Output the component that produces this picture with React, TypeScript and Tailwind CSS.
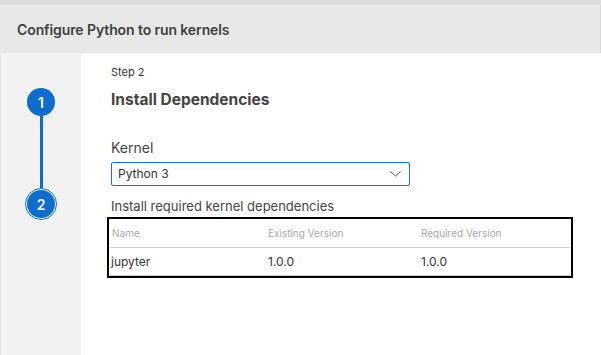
import React from 'react';

const font = { fontFamily: 'Inter, "Noto Sans", sans-serif' };

const deps = [{ name: 'jupyter', existing: '1.0.0', required: '1.0.0' }];

const App: React.FC = () => {
  return (
    <div className="w-[601px] h-[355px] flex flex-col bg-white overflow-hidden" style={font}>
      {/* Header */}
      <div className="h-[5px] bg-[#dcdcdc]" />
      <div className="h-[48px] bg-[#e8e8e8] flex items-center pl-[17px] border-r border-[#d8d8d8]">
        <h1 className="text-[14px] font-semibold text-[#3f3f3f] tracking-[-0.1px]">Configure Python to run kernels</h1>
      </div>

      <div className="flex flex-1">
        {/* Stepper */}
        <div className="w-[81px] bg-[#f2f2f2] border-l border-[#e4e4e4] flex flex-col items-center pt-[35px]">
          <div className="w-[28px] h-[28px] rounded-full bg-[#0e6dcc] flex items-center justify-center text-white text-[14px] font-semibold">
            1
          </div>
          <div className="w-[3px] h-[72px] bg-[#0e6dcc]" />
          <div className="w-[32px] h-[32px] rounded-full border border-[#0e6dcc] bg-white p-[1px]">
            <div className="w-full h-full rounded-full bg-[#0e6dcc] flex items-center justify-center text-white text-[14px] font-semibold">
              2
            </div>
          </div>
        </div>

        {/* Content */}
        <div className="flex-1 flex flex-col pl-[30px] pt-[12px] text-[#3f3f3f]">
          <div className="text-[11px] leading-[14px] text-[#333]">Step 2</div>
          <h2 className="mt-[11px] text-[15.5px] leading-[20px] font-bold text-[#444]">Install Dependencies</h2>

          <label className="mt-[29px] text-[14px] leading-[18px] text-[#444]">Kernel</label>
          <div className="mt-[5px] w-[299px] h-[24px] border border-[#1a6fc9] rounded-[2px] flex items-center justify-between pl-[6px] pr-[8px]">
            <span className="text-[12px] text-[#333]">Python 3</span>
            <svg width="11" height="6" viewBox="0 0 11 6" fill="none">
              <path d="M0.5 0.5 L5.5 5 L10.5 0.5" stroke="#555" strokeWidth="1" />
            </svg>
          </div>

          <div className="mt-[11px] text-[13px] leading-[18px] text-[#444]">Install required kernel dependencies</div>
          <div className="mt-[2px] -ml-[4px] w-[466px] border-2 border-black px-[1px]">
            <div className="h-[29px] flex items-center border-b border-[#d2d2d2] text-[10px] text-[#a8a8a8]">
              <div className="w-[158px] pl-[2px]">Name</div>
              <div className="w-[153px]">Existing Version</div>
              <div className="flex-1">Required Version</div>
            </div>
            {deps.map(d => (
              <div key={d.name} className="h-[28px] flex items-center border-b border-[#d2d2d2] text-[12px] text-[#333]">
                <div className="w-[158px] pl-[1px]">{d.name}</div>
                <div className="w-[153px]">{d.existing}</div>
                <div className="flex-1">{d.required}</div>
              </div>
            ))}
          </div>
        </div>
      </div>
    </div>
  );
};

export default App;
